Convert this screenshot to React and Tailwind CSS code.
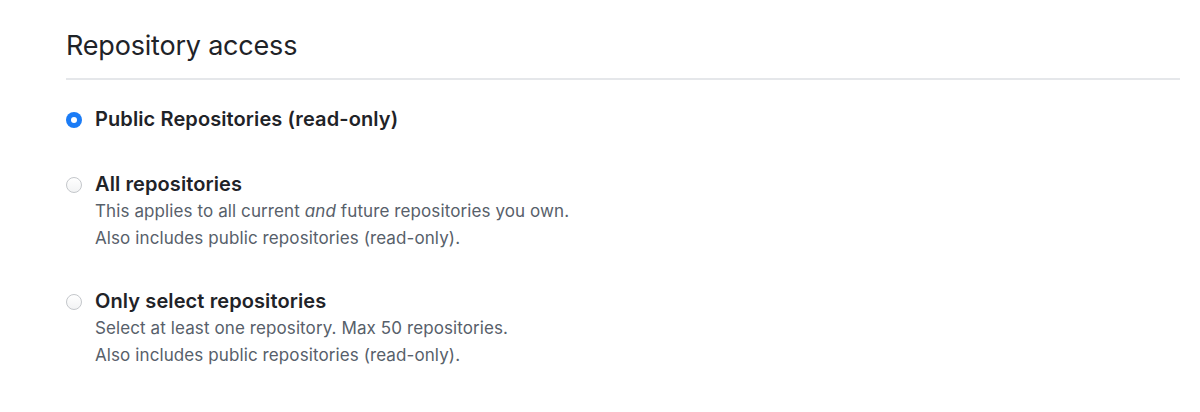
import { useState } from "react";

const options = [
  {
    id: "public",
    title: "Public Repositories (read-only)",
    lines: [],
  },
  {
    id: "all",
    title: "All repositories",
    lines: [
      <>
        This applies to all current <em>and</em> future repositories you own.
      </>,
      "Also includes public repositories (read-only).",
    ],
  },
  {
    id: "select",
    title: "Only select repositories",
    lines: [
      "Select at least one repository. Max 50 repositories.",
      "Also includes public repositories (read-only).",
    ],
  },
];

function Radio({ checked }) {
  if (checked) {
    return (
      <span className="w-4 h-4 rounded-full bg-[#1b7cf6] flex items-center justify-center shrink-0">
        <span className="w-[6px] h-[6px] rounded-full bg-white" />
      </span>
    );
  }
  return (
    <span className="w-4 h-4 rounded-full border border-[#c4c7cb] bg-gradient-to-b from-white to-[#f2f3f4] shrink-0" />
  );
}

export default function App() {
  const [selected, setSelected] = useState("public");

  return (
    <div
      className="w-[1200px] h-[412px] bg-white pl-[66px] pr-5 pt-[26px]"
      style={{ fontFamily: "Inter, 'Liberation Sans', sans-serif" }}
    >
      {/* Header */}
      <div className="border-b-2 border-[#e5e7ea] pb-[13px]">
        <h2 className="text-[27px] leading-[39px] font-normal text-[#1f2328] tracking-[-0.2px]">
          Repository access
        </h2>
      </div>

      {/* Options */}
      <div className="flex flex-col pt-[26px]">
        {options.map((opt, i) => (
          <label
            key={opt.id}
            onClick={() => setSelected(opt.id)}
            className={
              "flex items-start gap-[13px] cursor-pointer " +
              (i === 1 ? "mt-[38px]" : i === 2 ? "mt-[36px]" : "")
            }
          >
            <span className="h-[27px] flex items-center">
              <Radio checked={selected === opt.id} />
            </span>
            <div className="flex flex-col">
              <span className="text-[20px] leading-[27px] font-semibold text-[#1f2328] tracking-[0.1px]">
                {opt.title}
              </span>
              {opt.lines.map((line, j) => (
                <span
                  key={j}
                  className="text-[17px] leading-[27px] text-[#57606a] tracking-[0.1px]"
                >
                  {line}
                </span>
              ))}
            </div>
          </label>
        ))}
      </div>
    </div>
  );
}
